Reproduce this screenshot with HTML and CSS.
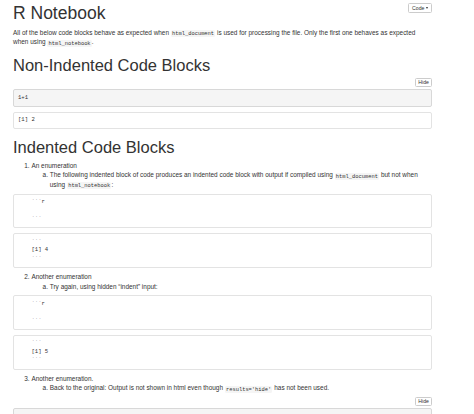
FILE: index.html
```html
<!DOCTYPE html>
<html>
<head>
<meta charset="utf-8">
<title>R Notebook</title>
<link rel="stylesheet" href="styles.css">
</head>
<body>
<div class="main">
  <div class="header">
    <h1 class="title">R Notebook</h1>
    <button class="btn code-btn">Code <span class="caret"></span></button>
  </div>
  <p class="intro">All of the below code blocks behave as expected when <code>html_document</code> is used for processing the file. Only the first one behaves as expected when using <code>html_notebook</code>.</p>

  <h1 class="section">Non-Indented Code Blocks</h1>
  <div class="toggle-row"><button class="btn">Hide</button></div>
  <pre class="src">1+1</pre>
  <pre class="out">[1] 2</pre>

  <h1 class="section">Indented Code Blocks</h1>
  <ol class="outer">
    <li>An enumeration
      <ol class="inner"><li>The following indented block of code produces an indented code block with output if compiled using <code>html_document</code> but not when using <code>html_notebook</code>:</li></ol>
    </li>
  </ol>
  <pre class="out">    ```r

    ```</pre>
  <pre class="out">    ```
    [1] 4
    ```</pre>
  <ol class="outer" start="2">
    <li>Another enumeration
      <ol class="inner"><li>Try again, using hidden “indent” input:</li></ol>
    </li>
  </ol>
  <pre class="out">    ```r

    ```</pre>
  <pre class="out">    ```
    [1] 5
    ```</pre>
  <ol class="outer" start="3">
    <li>Another enumeration.
      <ol class="inner"><li>Back to the original: Output is not shown in html even though <code>results='hide'</code> has not been used.</li></ol>
    </li>
  </ol>
  <div class="toggle-row toggle-late"><button class="btn">Hide</button></div>
  <pre class="src">    ```r</pre>
</div>
</body>
</html>
```

FILE: styles.css
```css
html, body {
  margin: 0;
  padding: 0;
  background: #fff;
}

body {
  font-family: "Liberation Sans", Arial, sans-serif;
  font-size: 6.45px;
  line-height: 9.2px;
  color: #333;
}

.main {
  padding: 0 42px 0 13px;
}

.header {
  display: flex;
  justify-content: space-between;
  align-items: flex-start;
  margin-top: 3px;
}

.title {
  margin: 0 0 4.6px;
  font-size: 17.5px;
  line-height: 20px;
  font-weight: 500;
  color: #333;
}

.btn {
  font-family: "Liberation Sans", Arial, sans-serif;
  font-size: 5.2px;
  line-height: 7px;
  height: 9px;
  padding: 0 2px;
  border: 1px solid #ccc;
  border-radius: 1.5px;
  background: #fff;
  color: #333;
  display: inline-flex;
  align-items: center;
  gap: 1.5px;
}

.code-btn {
  height: 10px;
  padding: 0 3px;
}

.caret {
  width: 0;
  height: 0;
  border-left: 1.5px solid transparent;
  border-right: 1.5px solid transparent;
  border-top: 2px solid #333;
}

.intro {
  margin: 0 0 4.6px;
}

code {
  font-family: "Liberation Mono", "DejaVu Sans Mono", monospace;
  font-size: 5.4px;
  line-height: 1;
  padding: 0.5px 1.2px;
  background: rgba(0, 0, 0, 0.04);
  border-radius: 1.5px;
  color: #333;
}

.section {
  margin: 9.2px 0 4.6px;
  font-size: 16.5px;
  line-height: 18.15px;
  font-weight: 500;
  color: #333;
}

.toggle-row {
  display: flex;
  justify-content: flex-end;
  margin-bottom: 2px;
}

.toggle-late {
  margin-top: 2px;
}

pre {
  margin: 0 0 4.6px;
  padding: 3.5px 4px;
  font-family: "Liberation Mono", "DejaVu Sans Mono", monospace;
  font-size: 5.6px;
  line-height: 8.6px;
  border: 1px solid #e3e3e3;
  border-radius: 2px;
  color: #333;
  white-space: pre;
}

pre.src {
  background: #f5f5f5;
  border-color: #d8d8d8;
}

pre.out {
  background: #fff;
}

ol {
  margin: 0;
  padding: 0;
}

ol.outer {
  padding-left: 18.4px;
  margin: 0 0 4.6px;
}

ol.inner {
  list-style-type: lower-alpha;
  padding-left: 18.4px;
}
```
